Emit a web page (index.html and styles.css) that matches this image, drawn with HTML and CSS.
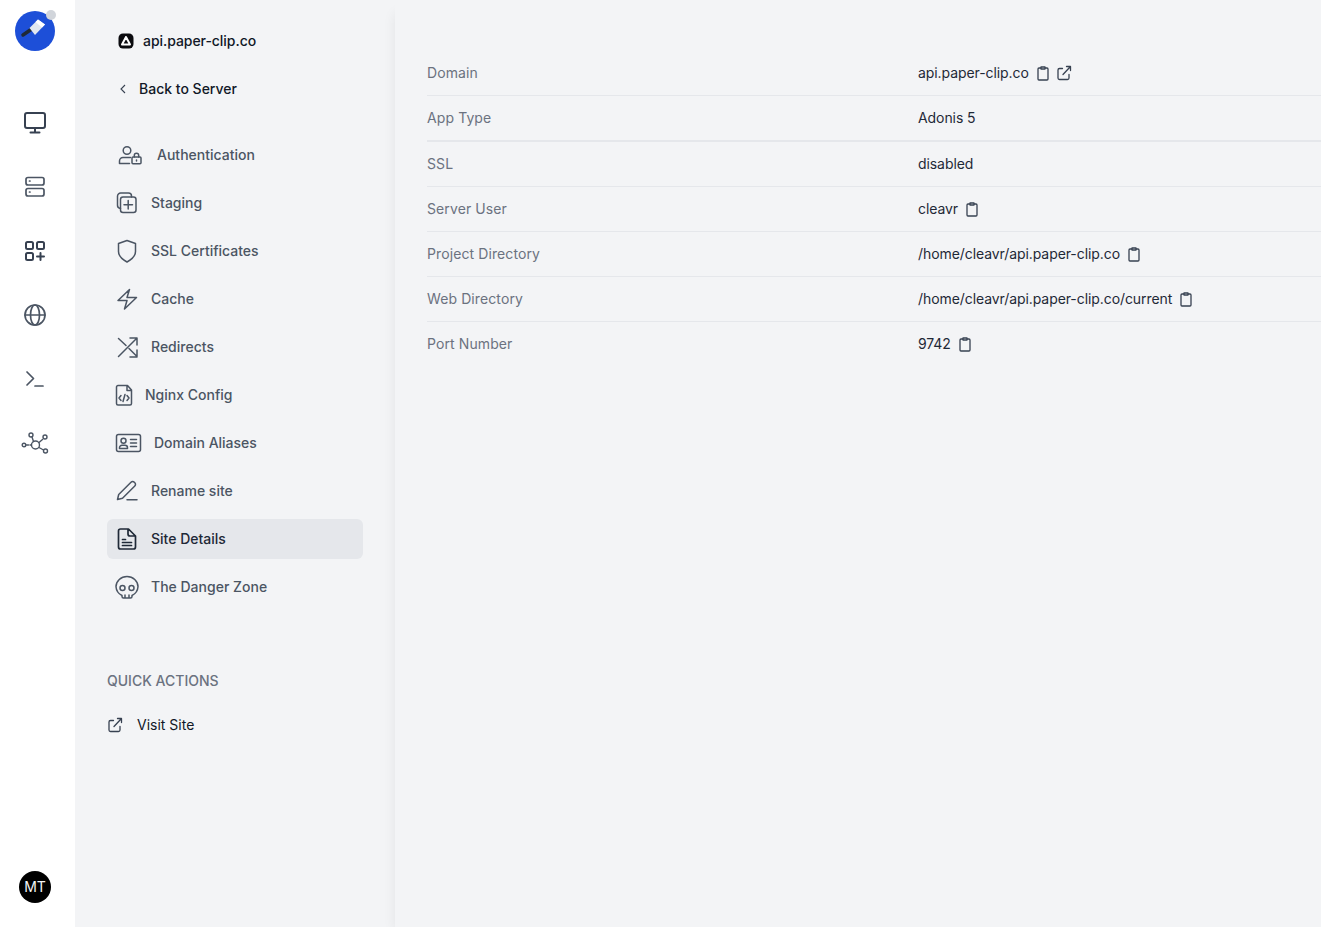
FILE: index.html
```html
<!DOCTYPE html>
<html lang="en">
<head>
<meta charset="utf-8">
<title>Site Details</title>
<link rel="stylesheet" href="styles.css">
</head>
<body>
<div class="page">
  <aside class="rail">
    <div class="rail-top">
      <div class="logo">
        <svg width="40" height="40" viewBox="0 0 40 40"><circle cx="20" cy="20" r="20" fill="#1d4fd8"/><path d="M8 24l8-5.500" stroke="#1f2937" stroke-width="3.500" stroke-linecap="round"/><path d="M14.500 17L23 8.500l7 5-10 10.500z" fill="#e2e8f0"/><path d="M23 8.500l7 5-3 3-6.500-5.500z" fill="#fff"/></svg>
        <span class="logo-dot"></span>
      </div>
      <nav class="rail-nav">
        <svg class="rail-icon" width="24" height="24" viewBox="0 0 24 24"><rect x="2" y="2" width="20" height="15" rx="2"/><path d="M12 17v4M7.500 21.500h9"/></svg>
        <svg class="rail-icon thin" width="24" height="24" viewBox="0 0 24 24"><rect x="3" y="2.500" width="18" height="7.500" rx="2"/><rect x="3" y="13.500" width="18" height="7.500" rx="2"/><path d="M6.500 6h.5M6.500 17h.5"/></svg>
        <svg class="rail-icon" width="24" height="24" viewBox="0 0 24 24"><rect x="3" y="3" width="7" height="7" rx="1.500"/><rect x="14" y="3" width="7" height="7" rx="1.500"/><rect x="3" y="14" width="7" height="7" rx="1.500"/><path d="M17.500 14v7M14 17.500h7"/></svg>
        <svg class="rail-icon thin" width="24" height="24" viewBox="0 0 24 24"><circle cx="12" cy="12" r="10"/><ellipse cx="12" cy="12" rx="4.500" ry="10"/><path d="M2 12h20"/></svg>
        <svg class="rail-icon thin" width="24" height="24" viewBox="0 0 24 24"><path d="M4 5l6.500 6.500L4 18M12 19h8"/></svg>
        <svg class="rail-icon fine" width="28" height="24" viewBox="0 0 28 24"><circle cx="14.500" cy="14" r="4"/><circle cx="10" cy="4" r="2"/><circle cx="24" cy="6" r="2"/><circle cx="24.500" cy="20" r="2"/><circle cx="3" cy="14" r="1.800"/><path d="M11 6l1.500 4.500M18 11.500l3.500-3M18 16.500l4.500 2.500M5.500 14h2M9 14h1"/></svg>
      </nav>
    </div>
    <div class="avatar">MT</div>
  </aside>

  <section class="panel">
    <div class="site-name">
      <svg width="16" height="16" viewBox="0 0 16 16"><rect x="0.500" y="0.500" width="15" height="15" rx="4.500" fill="#0b0b0f"/><path d="M8 4L4 11.500h8z" fill="none" stroke="#fff" stroke-width="2" stroke-linejoin="round"/></svg>
      <span>api.paper-clip.co</span>
    </div>
    <a class="back"><svg width="8" height="12" viewBox="0 0 8 12"><path d="M6 2L2 6l4 4"/></svg><span>Back to Server</span></a>

    <nav class="side-nav">
      <a class="item"><svg class="icon" width="30" height="24" viewBox="0 0 30 24"><circle cx="12" cy="7.500" r="3.800"/><path d="M4.500 20.500v-2.500a3.500 3.500 0 0 1 3.500-3.500h7.500M4.500 20.500h10"/><rect x="17" y="14" width="9" height="6.800" rx="1"/><path d="M19.300 14v-1.500a2.200 2.200 0 0 1 4.400 0V14M21.500 17v1"/></svg><span>Authentication</span></a>
      <a class="item"><svg class="icon" width="24" height="24" viewBox="0 0 24 24"><rect x="5.500" y="6" width="15.500" height="15.500" rx="2.500"/><path d="M13.200 9.500v8.500M9 13.700h8.500M5.500 17.500a3.200 3.200 0 0 1-3-3.200V5.200A3.200 3.200 0 0 1 5.700 2h7.800a3 3 0 0 1 3 3v1"/></svg><span>Staging</span></a>
      <a class="item"><svg class="icon" width="24" height="24" viewBox="0 0 24 24"><path d="M12 1.500l8.500 3v8c0 4.700-3.800 7.900-8.500 10.500-4.700-2.600-8.500-5.800-8.500-10.500v-8z"/></svg><span>SSL Certificates</span></a>
      <a class="item"><svg class="icon" width="24" height="24" viewBox="0 0 24 24"><path d="M3 13.500L14.500 2.500 12 10.500h9.500L9.500 22 12 13.500z"/></svg><span>Cache</span></a>
      <a class="item"><svg class="icon" width="24" height="24" viewBox="0 0 24 24"><path d="M3.500 21.500L21.500 3.500M15 3h7v7M3.500 3.500l7.500 7M14 13.500l8 8M22 15v7h-7"/></svg><span>Redirects</span></a>
      <a class="item"><svg class="icon" width="18" height="24" viewBox="0 0 18 24"><path d="M3 2.500h9.500l4 4.500v13.500a1.500 1.500 0 0 1-1.500 1.500H3a1.500 1.500 0 0 1-1.500-1.500V4A1.500 1.500 0 0 1 3 2.500zM12 2.500v5h4.500M6 12.500l-2 2.500 2 2.500M12 12.500l2 2.500-2 2.500M10 11.500l-2 7"/></svg><span>Nginx Config</span></a>
      <a class="item"><svg class="icon" width="27" height="24" viewBox="0 0 27 24"><rect x="1.500" y="3.500" width="24" height="17" rx="2"/><circle cx="8.500" cy="9.700" r="2.500"/><path d="M4.500 17.500v-.7a2.500 2.500 0 0 1 2.500-2.500h3a2.500 2.500 0 0 1 2.500 2.500v.7zM15.500 8.500h6M15.500 12h6M15.500 15.500h6"/></svg><span>Domain Aliases</span></a>
      <a class="item"><svg class="icon" width="24" height="24" viewBox="0 0 24 24"><path d="M2.500 20.500l1.200-5L16 3.200a2.300 2.300 0 0 1 3.300 0l.5.5a2.300 2.300 0 0 1 0 3.300L7.500 19.300zM12 20.800h10"/></svg><span>Rename site</span></a>
      <a class="item active"><svg class="icon" width="24" height="24" viewBox="0 0 24 24"><path d="M5.500 2h8l7 7v11a2 2 0 0 1-2 2h-13a2 2 0 0 1-2-2V4a2 2 0 0 1 2-2zM13 2v5a2 2 0 0 0 2 2h5.500M7.500 12.500h3M7.500 15.500h9M7.500 18.500h9"/></svg><span>Site Details</span></a>
      <a class="item"><svg class="icon" width="24" height="24" viewBox="0 0 24 24"><path d="M7 20.500a10.500 10.500 0 0 1-6-8.700C1 6 6 1.500 12 1.500S23 6 23 11.800a10.500 10.500 0 0 1-6 8.700v1a1.500 1.500 0 0 1-1.500 1.500h-7A1.500 1.500 0 0 1 7 21.500zM10 20v3M14 20v3"/><circle cx="7.500" cy="13" r="2.500"/><circle cx="16.500" cy="13" r="2.500"/></svg><span>The Danger Zone</span></a>
    </nav>

    <h2 class="quick-title">QUICK ACTIONS</h2>
    <a class="visit"><svg class="ext" width="16" height="16" viewBox="0 0 16 16"><path d="M6.500 3.500H3.500a1.500 1.500 0 0 0-1.500 1.500v8a1.500 1.500 0 0 0 1.500 1.500h8a1.500 1.500 0 0 0 1.500-1.500V9.500M7 9.500l7.500-8M10.500 1.500h4v4"/></svg><span>Visit Site</span></a>
  </section>

  <main class="details">
    <div class="row"><div class="label">Domain</div><div class="value"><span>api.paper-clip.co</span><svg class="clip" width="14" height="16" viewBox="0 0 14 16"><path d="M4.500 3H3A1 1 0 0 0 2 4v10a1 1 0 0 0 1 1h8a1 1 0 0 0 1-1V4a1 1 0 0 0-1-1H9.500M5 2h4v2H5z"/></svg><svg class="ext" width="16" height="16" viewBox="0 0 16 16"><path d="M6.500 3.500H3.500a1.500 1.500 0 0 0-1.500 1.500v8a1.500 1.500 0 0 0 1.500 1.500h8a1.500 1.500 0 0 0 1.500-1.500V9.500M7 9.500l7.500-8M10.500 1.500h4v4"/></svg></div></div>
    <div class="row thick"><div class="label">App Type</div><div class="value"><span>Adonis 5</span></div></div>
    <div class="row"><div class="label">SSL</div><div class="value"><span>disabled</span></div></div>
    <div class="row"><div class="label">Server User</div><div class="value"><span>cleavr</span><svg class="clip" width="14" height="16" viewBox="0 0 14 16"><path d="M4.500 3H3A1 1 0 0 0 2 4v10a1 1 0 0 0 1 1h8a1 1 0 0 0 1-1V4a1 1 0 0 0-1-1H9.500M5 2h4v2H5z"/></svg></div></div>
    <div class="row"><div class="label">Project Directory</div><div class="value"><span>/home/cleavr/api.paper-clip.co</span><svg class="clip" width="14" height="16" viewBox="0 0 14 16"><path d="M4.500 3H3A1 1 0 0 0 2 4v10a1 1 0 0 0 1 1h8a1 1 0 0 0 1-1V4a1 1 0 0 0-1-1H9.500M5 2h4v2H5z"/></svg></div></div>
    <div class="row"><div class="label">Web Directory</div><div class="value"><span>/home/cleavr/api.paper-clip.co/current</span><svg class="clip" width="14" height="16" viewBox="0 0 14 16"><path d="M4.500 3H3A1 1 0 0 0 2 4v10a1 1 0 0 0 1 1h8a1 1 0 0 0 1-1V4a1 1 0 0 0-1-1H9.500M5 2h4v2H5z"/></svg></div></div>
    <div class="row last"><div class="label">Port Number</div><div class="value"><span>9742</span><svg class="clip" width="14" height="16" viewBox="0 0 14 16"><path d="M4.500 3H3A1 1 0 0 0 2 4v10a1 1 0 0 0 1 1h8a1 1 0 0 0 1-1V4a1 1 0 0 0-1-1H9.500M5 2h4v2H5z"/></svg></div></div>
  </main>
</div>
</body>
</html>
```

FILE: styles.css
```css
* { box-sizing: border-box; }
html, body { margin: 0; height: 100%; overflow: hidden; }
body { font-family: Inter, "Liberation Sans", sans-serif; font-size: 14px; line-height: 20px; color: #374151; background: #f3f4f6; }
svg { display: block; flex: none; }
.page { display: flex; height: 927px; }

.rail { width: 75px; flex: none; background: #fff; display: flex; flex-direction: column; justify-content: space-between; align-items: center; padding: 11px 5px 24px 0; }
.rail-top { display: flex; flex-direction: column; align-items: center; }
.logo { position: relative; width: 40px; height: 40px; }
.logo-dot { position: absolute; top: -1px; right: -1px; width: 10px; height: 10px; border-radius: 50%; background: #d1d5db; }
.rail-nav { display: flex; flex-direction: column; align-items: center; gap: 40px; margin-top: 60px; }
.rail-icon { fill: none; stroke: #374151; stroke-width: 2; stroke-linecap: round; stroke-linejoin: round; }
.rail-icon.thin { stroke: #4b5563; stroke-width: 1.700; }
.rail-icon.fine { stroke: #4b5563; stroke-width: 1.400; }
.avatar { width: 32px; height: 32px; border-radius: 50%; background: #000; color: #f3f4f6; display: flex; align-items: center; justify-content: center; font-size: 14px; }

.panel { width: 320px; flex: none; padding: 31px 32px 0; background: #f3f4f6; }
.site-name { display: flex; align-items: center; gap: 9px; padding-left: 11px; color: #111827; font-weight: 500; height: 20px; letter-spacing: -0.05px; }
.back { display: flex; align-items: center; gap: 12px; padding-left: 12px; margin-top: 28px; color: #111827; font-weight: 500; height: 20px; }
.back svg { fill: none; stroke: #374151; stroke-width: 1.100; }
.side-nav { display: flex; flex-direction: column; gap: 8px; margin-top: 36px; }
.item { display: flex; align-items: center; gap: 12px; height: 40px; padding-left: 8px; border-radius: 6px; color: #4b5563; font-weight: 500; }
.item.active { background: #e5e7eb; color: #1f2937; }
.icon { fill: none; stroke: #4b5563; stroke-width: 1.500; stroke-linecap: round; stroke-linejoin: round; }
.item.active .icon { stroke: #1f2937; stroke-width: 1.700; }
.quick-title { margin: 64px 0 0; font-size: 14px; line-height: 20px; font-weight: 500; color: #6b7280; }
.visit { display: flex; align-items: center; gap: 14px; margin-top: 24px; color: #111827; height: 20px; }
.ext, .clip { fill: none; stroke: #374151; stroke-width: 1.300; stroke-linecap: round; stroke-linejoin: round; }

.details { flex: 1; padding-top: 51px; padding-left: 32px; background: #f3f4f6; box-shadow: -5px 8px 12px -5px rgba(0, 0, 0, 0.07); position: relative; }
.row { display: flex; align-items: center; height: 45px; border-bottom: 1px solid #e5e7eb; }
.row.thick { height: 46px; border-bottom-width: 2px; }
.row.last { border-bottom-color: transparent; }
.label { width: 491px; flex: none; color: #6b7280; letter-spacing: 0.1px; }
.value { display: flex; align-items: center; gap: 7px; color: #1f2937; letter-spacing: -0.08px; }
.value .ext { margin-left: -1px; }
```
